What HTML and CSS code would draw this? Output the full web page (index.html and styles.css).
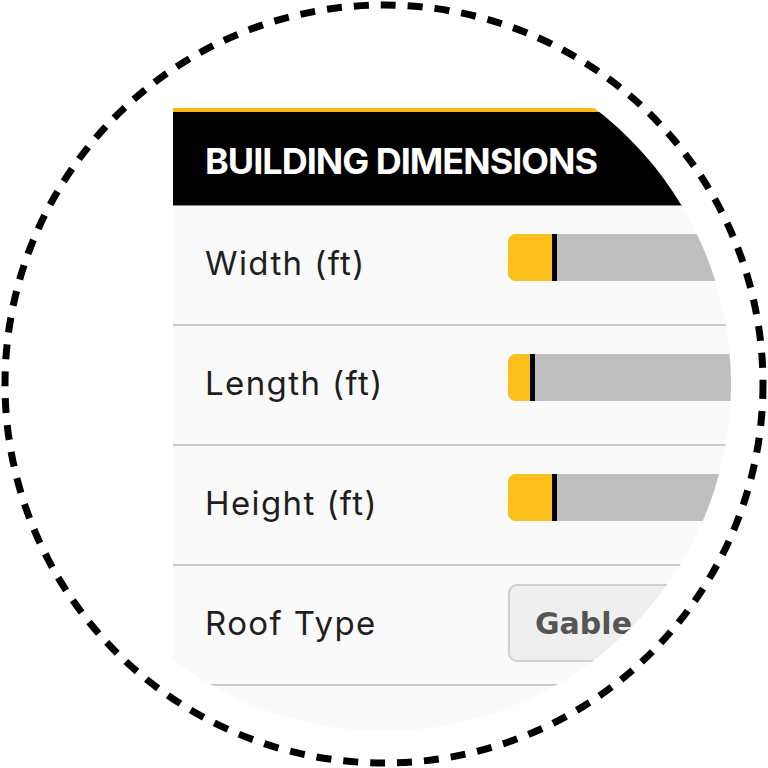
FILE: index.html
```html
<!DOCTYPE html>
<html>
<head>
<meta charset="utf-8">
<link rel="stylesheet" href="styles.css">
</head>
<body>
<div class="stage">
  <div class="lens">
    <div class="panel">
      <div class="panel-head">BUILDING DIMENSIONS</div>
      <div class="row">
        <div class="label">Width (ft)</div>
        <div class="track"><div class="fill" style="width:44px"></div><div class="thumb"></div></div>
      </div>
      <div class="row">
        <div class="label">Length (ft)</div>
        <div class="track"><div class="fill" style="width:22px"></div><div class="thumb"></div></div>
      </div>
      <div class="row">
        <div class="label">Height (ft)</div>
        <div class="track"><div class="fill" style="width:44px"></div><div class="thumb"></div></div>
      </div>
      <div class="row">
        <div class="label">Roof Type</div>
        <div class="select">Gable</div>
      </div>
      <div class="row">
        <div class="label">Pitch / Slope</div>
      </div>
    </div>
  </div>
  <svg class="ring" width="768" height="768" viewBox="0 0 768 768">
    <circle cx="384" cy="384" r="379" fill="none" stroke="#000" stroke-width="7" stroke-dasharray="15 12"/>
  </svg>
</div>
</body>
</html>
```
FILE: styles.css
```css
html, body {
  margin: 0;
  padding: 0;
  background: #fff;
}
.stage {
  position: relative;
  width: 768px;
  height: 768px;
  overflow: hidden;
}
.ring {
  position: absolute;
  left: 0;
  top: 0;
}
.lens {
  position: absolute;
  left: 37px;
  top: 37px;
  width: 694px;
  height: 694px;
  border-radius: 50%;
  overflow: hidden;
  box-sizing: border-box;
  padding: 71px 0 0 136px;
}
.panel {
  width: 740px;
  background: #fafafa;
  border-top: 4px solid #f7b718;
  font-family: "Inter", "Open Sans", sans-serif;
}
.panel-head {
  height: 94px;
  background: #000;
  color: #fff;
  font-weight: 700;
  font-size: 36px;
  letter-spacing: -1px;
  display: flex;
  align-items: center;
  padding-left: 32px;
  padding-top: 4px;
  border-bottom: 1px solid #888;
  box-sizing: border-box;
}
.row {
  height: 120px;
  box-sizing: border-box;
  border-bottom: 2px solid #cccccc;
  display: flex;
  align-items: center;
  padding-left: 32px;
}
.label {
  width: 303px;
  flex-shrink: 0;
  font-size: 33px;
  letter-spacing: 1.4px;
  color: #1e1e1e;
  margin-top: -4px;
}
.track {
  display: flex;
  flex-shrink: 0;
  height: 47px;
  width: 400px;
  background: #bfbfbf;
  border-radius: 8px 0 0 8px;
  overflow: hidden;
  margin-top: -16px;
}
.fill {
  background: #fdbf1c;
  height: 100%;
}
.thumb {
  width: 5px;
  height: 100%;
  background: #000;
}
.select {
  flex-shrink: 0;
  height: 78px;
  width: 300px;
  box-sizing: border-box;
  border: 2px solid #cfcfcf;
  border-radius: 9px;
  background: #efefef;
  color: #555;
  font-family: "DejaVu Sans", "Verdana", sans-serif;
  font-weight: 700;
  font-size: 30px;
  display: flex;
  align-items: center;
  padding-left: 25px;
  margin-top: -4px;
}
```
